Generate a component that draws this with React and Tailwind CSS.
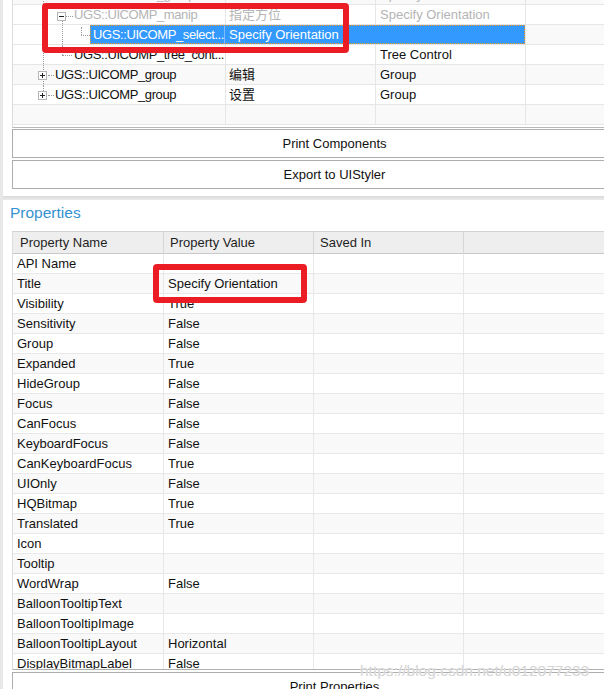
import React from "react";

const font = "font-['Liberation_Sans','Noto_Sans_CJK_SC',sans-serif]";

function VLine({ left, top = 0, bottom }) {
  return (
    <div
      className="absolute w-0 border-l border-dotted border-[#9a9a9a]"
      style={{ left, top, ...(bottom !== undefined ? { height: bottom - top } : { bottom: 0 }) }}
    />
  );
}
function HLine({ left, top, width }) {
  return (
    <div
      className="absolute h-0 border-t border-dotted border-[#9a9a9a]"
      style={{ left, top, width }}
    />
  );
}
function Box({ left, top, plus }) {
  return (
    <div
      className="absolute w-[9px] h-[9px] border border-[#b5b5b5] bg-white flex items-center justify-center"
      style={{ left, top }}
    >
      <div className="absolute w-[5px] h-px bg-[#222]" />
      {plus && <div className="absolute h-[5px] w-px bg-[#222]" />}
    </div>
  );
}

function TreeRow({ bg, c1, c2, c3, indent, gray, lines, mt }) {
  return (
    <div
      className={`grid grid-cols-[213px_150px_150px_1fr] h-[20px] border-b border-[#e6e6e6] ${bg ? "bg-[#f9f9f9]" : "bg-white"} ${mt || ""}`}
    >
      <div className={`relative border-r border-[#e6e6e6] leading-[19px] whitespace-nowrap overflow-hidden tracking-[-0.4px] ${gray ? "text-[#b4b4b4]" : "text-[#111]"}`}>
        {lines}
        <span className="absolute top-0" style={{ left: indent }}>{c1}</span>
      </div>
      <div className={`border-r border-[#e6e6e6] leading-[19px] pl-[3px] whitespace-nowrap overflow-hidden ${gray ? "text-[#b4b4b4]" : "text-[#111]"}`}>{c2}</div>
      <div className={`border-r border-[#e6e6e6] leading-[19px] pl-[4px] whitespace-nowrap overflow-hidden ${gray ? "text-[#b4b4b4]" : "text-[#111]"}`}>{c3}</div>
      <div />
    </div>
  );
}

const props = [
  ["API Name", ""],
  ["Title", "Specify Orientation"],
  ["Visibility", "True"],
  ["Sensitivity", "False"],
  ["Group", "False"],
  ["Expanded", "True"],
  ["HideGroup", "False"],
  ["Focus", "False"],
  ["CanFocus", "False"],
  ["KeyboardFocus", "False"],
  ["CanKeyboardFocus", "True"],
  ["UIOnly", "False"],
  ["HQBitmap", "True"],
  ["Translated", "True"],
  ["Icon", ""],
  ["Tooltip", ""],
  ["WordWrap", "False"],
  ["BalloonTooltipText", ""],
  ["BalloonTooltipImage", ""],
  ["BalloonTooltipLayout", "Horizontal"],
  ["DisplayBitmapLabel", "False"],
];

export default function App() {
  return (
    <div className={`relative w-[604px] h-[689px] overflow-hidden bg-white border-l-[3px] border-[#e8e8e8] text-[13px] ${font}`}>
      <div className="w-[660px] flex flex-col">
        {/* Top section */}
        <div className="pl-[9px] flex flex-col">
          <div className="h-[128px] border-l border-b border-l-[#dcdcdc] border-b-[#b9b9b9] overflow-hidden bg-white">
            <TreeRow
              mt="-mt-[15px]"
              bg
              gray
              indent={61}
              c1="UGS::UICOMP_group"
              c2=""
              c3="Specify Point"
              lines={<VLine left={30} />}
            />
            <TreeRow
              gray
              indent={61}
              c1="UGS::UICOMP_manip"
              c2="指定方位"
              c3="Specify Orientation"
              lines={
                <>
                  <VLine left={30} />
                  <Box left={44} top={7} />
                  <HLine left={53} top={11} width={7} />
                  <VLine left={49} top={16} />
                </>
              }
            />
            {/* selected row */}
            <div className="grid grid-cols-[512px_1fr] h-[20px] border-b border-[#e6e6e6]">
              <div className="relative flex">
                <VLine left={30} />
                <VLine left={49} />
                <VLine left={68} top={2} bottom={10} />
                <HLine left={68} top={10} width={9} />
                <div className="ml-[77px] w-[435px] h-[19px] bg-[#3399ff] outline outline-1 outline-dotted outline-[#f39a1e] -outline-offset-1 flex text-white leading-[19px] whitespace-nowrap">
                  <div className="w-[135px] pl-[3px] border-r border-[#7fbcff] overflow-hidden tracking-[-0.4px]">UGS::UICOMP_select...</div>
                  <div className="w-[150px] pl-[4px]">Specify Orientation</div>
                  <div className="flex-1" />
                </div>
              </div>
              <div className="bg-[#f9f9f9] border-l border-[#e6e6e6]" />
            </div>
            <TreeRow
              indent={61}
              c1="UGS::UICOMP_tree_cont..."
              c2=""
              c3="Tree Control"
              lines={
                <>
                  <VLine left={30} />
                  <VLine left={49} top={0} bottom={10} />
                  <HLine left={49} top={10} width={10} />
                </>
              }
            />
            <TreeRow
              bg
              indent={42}
              c1="UGS::UICOMP_group"
              c2="编辑"
              c3="Group"
              lines={
                <>
                  <VLine left={30} />
                  <Box left={25} top={6} plus />
                  <HLine left={35} top={10} width={6} />
                </>
              }
            />
            <TreeRow
              indent={42}
              c1="UGS::UICOMP_group"
              c2="设置"
              c3="Group"
              lines={
                <>
                  <VLine left={30} top={0} bottom={6} />
                  <Box left={25} top={6} plus />
                  <HLine left={35} top={10} width={6} />
                </>
              }
            />
            <TreeRow bg c1="" c2="" c3="" indent={0} />
          </div>
          <button className="mt-[1px] w-[645px] h-[29px] border border-[#adadad] bg-white text-[#111] text-[13px] flex items-center justify-center">
            Print Components
          </button>
          <button className="mt-[2px] w-[645px] h-[29px] border border-[#adadad] bg-white text-[#111] text-[13px] flex items-center justify-center">
            Export to UIStyler
          </button>
        </div>
        <div className="mt-[7px] h-[4px] bg-gradient-to-b from-[#d9d9d9] to-[#ececec]" />

        {/* Properties section */}
        <div className="flex flex-col">
          <div className="pl-[7px] pt-[3px] h-[31px] text-[15.5px] leading-[20px] text-[#3592d0]">Properties</div>
          <div className="ml-[9px] h-[439px] border-l border-t border-b border-l-[#dcdcdc] border-t-[#d2d2d2] border-b-[#b0b0b0] overflow-hidden">
            <div className="grid grid-cols-[151px_150px_150px_1fr] h-[22px] bg-[#eeeeee] border-b border-[#c9c9c9] text-[#1e1e1e] leading-[22px]">
              <div className="pl-[7px] border-r border-[#d6d6d6]">Property Name</div>
              <div className="pl-[6px] border-r border-[#d6d6d6]">Property Value</div>
              <div className="pl-[6px] border-r border-[#d6d6d6]">Saved In</div>
              <div />
            </div>
            {props.map(([n, v], i) => (
              <div
                key={n}
                className={`grid grid-cols-[151px_150px_150px_1fr] h-[20px] border-b border-[#e8e8e8] leading-[19px] text-[#111] ${i % 2 === 1 ? "bg-[#f9f9f9]" : "bg-white"}`}
              >
                <div className="pl-[4px] border-r border-[#e8e8e8] whitespace-nowrap">{n}</div>
                <div className="pl-[4px] border-r border-[#e8e8e8] whitespace-nowrap">{v}</div>
                <div className="border-r border-[#e8e8e8]" />
                <div />
              </div>
            ))}
          </div>
          <button className="ml-[9px] mt-[2px] w-[645px] h-[29px] border border-[#adadad] bg-white text-[#111] text-[13px] flex items-center justify-center">
            Print Properties
          </button>
        </div>
      </div>

      {/* Red annotation boxes */}
      <div className="absolute left-[39px] top-[3px] w-[307px] h-[50px] border-[6px] border-[#ec1c24] rounded-[4px]" />
      <div className="absolute left-[150px] top-[264px] w-[154px] h-[39px] border-[6px] border-[#ec1c24] rounded-[4px]" />

      {/* Watermark */}
      <div className="absolute left-[357px] top-[661px] text-[15.5px] leading-[20px] text-[#d4d4d4] font-['Liberation_Sans',sans-serif] [text-shadow:0_0_1px_#fff] whitespace-nowrap">
        https://blog.csdn.net/u012077233
      </div>
    </div>
  );
}
